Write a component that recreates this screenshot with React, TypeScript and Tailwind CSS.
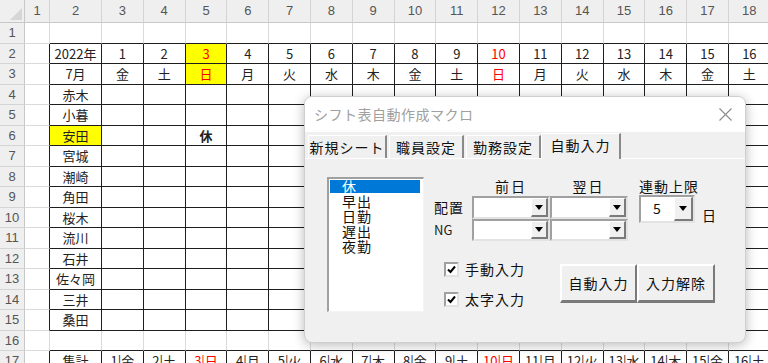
import React from 'react';

const days = ['金', '土', '日', '月', '火', '水', '木', '金', '土', '日', '月', '火', '水', '木', '金', '土'];
const names = ['赤木', '小暮', '安田', '宮城', '潮崎', '角田', '桜木', '流川', '石井', '佐々岡', '三井', '桑田'];
const cols = Array.from({ length: 18 }, (_, i) => i + 1);
const rows = Array.from({ length: 17 }, (_, i) => i + 1);

const inTable = (r: number, c: number) =>
  ((r >= 2 && r <= 15) || r === 17) && c >= 2 && c <= 18;

const wc = (c: number) => (c === 1 ? 'w-[25px]' : c === 2 ? 'w-[52px]' : 'w-[41.8px]');

function cellContent(r: number, c: number): { text: string; red?: boolean; yellow?: boolean; bold?: boolean } {
  if (r === 2) {
    if (c === 2) return { text: '2022年' };
    if (c >= 3) return { text: String(c - 2), red: days[c - 3] === '日', yellow: c === 5 };
  }
  if (r === 3) {
    if (c === 2) return { text: '7月' };
    if (c >= 3) return { text: days[c - 3], red: days[c - 3] === '日', yellow: c === 5 };
  }
  if (r >= 4 && r <= 15) {
    if (c === 2) return { text: names[r - 4], yellow: r === 6 };
    if (r === 6 && c === 5) return { text: '休', bold: true };
  }
  if (r === 17) {
    if (c === 2) return { text: '集計' };
    if (c >= 3) return { text: `${c - 2}|${days[c - 3]}`, red: days[c - 3] === '日' };
  }
  return { text: '' };
}

function Cell({ r, c }: { r: number; c: number }) {
  const rb = inTable(r, c) || inTable(r, c + 1);
  const bb = inTable(r, c) || inTable(r + 1, c);
  const ct = cellContent(r, c);
  return (
    <div
      className={`${wc(c)} shrink-0 h-full flex items-center justify-center overflow-hidden whitespace-nowrap text-[13px] border-r border-b ${
        rb ? 'border-r-[#1e1e1e]' : 'border-r-[#dadada]'
      } ${bb ? 'border-b-[#1e1e1e]' : 'border-b-[#dadada]'} ${ct.yellow ? 'bg-[#ffff00]' : 'bg-white'} ${
        ct.red ? 'text-[#ff0000]' : 'text-[#222]'
      } ${ct.bold ? 'font-bold' : ''}`}
    >
      {ct.text}
    </div>
  );
}

function DropBtn({ w }: { w: string }) {
  return (
    <div className={`${w} h-full shrink-0 bg-[#f0f0f0] border-t border-l border-t-white border-l-white border-r-2 border-b-2 border-r-[#7a7a7a] border-b-[#7a7a7a] flex items-center justify-center`}>
      <svg width="8" height="5" viewBox="0 0 8 5">
        <path d="M0 0 H8 L4 5 Z" fill="#000" />
      </svg>
    </div>
  );
}

function Combo() {
  return (
    <div className="w-[78px] h-full bg-white border-2 border-t-[#a0a0a0] border-l-[#a0a0a0] border-r-[#e3e3e3] border-b-[#e3e3e3] flex justify-end">
      <DropBtn w="w-[17px]" />
    </div>
  );
}

function CheckBox({ label }: { label: string }) {
  return (
    <div className="flex items-center h-[15px]">
      <div className="w-[15px] h-[15px] bg-white border-2 border-t-[#a0a0a0] border-l-[#a0a0a0] border-r-[#e3e3e3] border-b-[#e3e3e3] flex items-center justify-center">
        <svg width="9" height="9" viewBox="0 0 9 9">
          <path d="M1 4.5 L3.5 7 L8 1.5" stroke="#000" strokeWidth="2" fill="none" />
        </svg>
      </div>
      <span className="ml-[6px] text-[14px] tracking-[1px] text-[#111]">{label}</span>
    </div>
  );
}

function Btn({ label, w }: { label: string; w: string }) {
  return (
    <div className={`${w} h-[39px] bg-[#f0f0f0] border-t-2 border-l-2 border-t-white border-l-white border-r-2 border-b-[3px] border-r-[#7a7a7a] border-b-[#7a7a7a] flex items-center justify-center text-[14px] tracking-[1px] text-[#111]`}>
      {label}
    </div>
  );
}

function Dialog() {
  return (
    <div className="absolute left-[304px] top-[96px] w-[442px] h-[247px] rounded-[8px] bg-[#f0f0f0] border border-[#cfcfcf] shadow-[0_2px_12px_rgba(0,0,0,0.28)] overflow-hidden flex flex-col">
      <div className="h-[35px] shrink-0 bg-white flex items-center justify-between pl-[9px] pr-[13px]">
        <span className="text-[14px] text-[#a0a0a0] tracking-[0.5px]">シフト表自動作成マクロ</span>
        <svg width="13" height="13" viewBox="0 0 13 13">
          <path d="M0.5 0.5 L12.5 12.5 M12.5 0.5 L0.5 12.5" stroke="#8a8a8a" strokeWidth="1.1" />
        </svg>
      </div>
      <div className="h-[26px] shrink-0 flex items-end pl-[3px] text-[14px] tracking-[1px] text-[#111]">
        <div className="w-[79px] h-[23px] border-t border-l border-t-white border-l-white border-r-2 border-r-[#8a8a8a] flex items-center justify-center">新規シート</div>
        <div className="ml-[2px] w-[75px] h-[23px] border-t border-l border-t-white border-l-white border-r-2 border-r-[#8a8a8a] flex items-center justify-center">職員設定</div>
        <div className="ml-[2px] w-[75px] h-[23px] border-t border-l border-t-white border-l-white border-r-2 border-r-[#8a8a8a] flex items-center justify-center">勤務設定</div>
        <div className="w-[80px] h-[26px] -mb-[1px] relative z-10 bg-[#f0f0f0] border-t border-l border-t-white border-l-white border-r-2 border-r-[#8a8a8a] flex items-center justify-center pb-[2px]">自動入力</div>
      </div>
      <div className="flex-1 border-t border-t-white flex pl-[22px] pt-[18px]">
        <div className="w-[97px] h-[135px] shrink-0 bg-white border-t-2 border-l-2 border-t-[#a0a0a0] border-l-[#a0a0a0] border-r border-b border-r-[#f4f4f4] border-b-[#f4f4f4] pt-[1px] pl-[1px] text-[14px] tracking-[1px] text-[#111]">
          <div className="w-[90px] h-[13px] bg-[#0078d7] text-white pl-[12px] leading-[13px] mb-[1px]">休</div>
          <div className="pl-[12px] h-[15px] leading-[15px]">早出</div>
          <div className="pl-[12px] h-[15px] leading-[15px]">日勤</div>
          <div className="pl-[12px] h-[15px] leading-[15px]">遅出</div>
          <div className="pl-[12px] h-[15px] leading-[15px]">夜勤</div>
        </div>
        <div className="ml-[10px] flex flex-col text-[#111]">
          <div className="flex">
            <div className="w-[38px] flex flex-col text-[14px] tracking-[1px]">
              <div className="h-[19px]" />
              <div className="h-[23px] flex items-center">配置</div>
              <div className="h-[22px] flex items-center text-[13px] tracking-[0px] text-[#222]">NG</div>
            </div>
            <div className="flex flex-col">
              <div className="h-[19px] flex text-[14px] tracking-[2px]">
                <div className="w-[78px] flex items-center justify-center">前日</div>
                <div className="w-[77px] flex items-center justify-center">翌日</div>
              </div>
              <div className="h-[23px] flex">
                <Combo />
                <Combo />
              </div>
              <div className="h-[22px] flex">
                <Combo />
                <Combo />
              </div>
            </div>
            <div className="ml-[11px] flex flex-col">
              <div className="h-[18px] flex items-center text-[14px] tracking-[1px]">連動上限</div>
              <div className="flex items-end">
                <div className="w-[56px] h-[28px] bg-white border-2 border-t-[#a0a0a0] border-l-[#a0a0a0] border-r-[#e3e3e3] border-b-[#e3e3e3] flex">
                  <div className="flex-1 pl-[12px] pt-[1px] text-[14px]">5</div>
                  <DropBtn w="w-[19px]" />
                </div>
                <div className="ml-[7px] text-[14px] leading-[16px]">日</div>
              </div>
            </div>
          </div>
          <div className="flex mt-[21px] ml-[10px]">
            <div className="w-[116px] flex flex-col gap-[15px]">
              <CheckBox label="手動入力" />
              <CheckBox label="太字入力" />
            </div>
            <div className="flex mt-[2px]">
              <Btn label="自動入力" w="w-[77px]" />
              <Btn label="入力解除" w="w-[78px]" />
            </div>
          </div>
        </div>
      </div>
    </div>
  );
}

export default function App() {
  return (
    <div className="relative w-[768px] h-[363px] overflow-hidden bg-white font-['Noto_Sans_CJK_JP','Liberation_Sans',sans-serif]">
      <div className="flex flex-col">
        <div className="flex h-[23px] bg-[#efefef]">
          <div className="w-[25px] shrink-0 h-full border-r border-b border-r-[#c8c8c8] border-b-[#c8c8c8] relative">
            <svg className="absolute right-[2px] bottom-[2px]" width="12" height="12" viewBox="0 0 12 12">
              <path d="M12 0 V12 H0 Z" fill="#d6d6d6" />
            </svg>
          </div>
          {cols.map((c) => (
            <div
              key={c}
              className={`${wc(c)} shrink-0 h-full flex items-center justify-center text-[13px] text-[#555] border-r border-b border-r-[#d4d4d4] border-b-[#c8c8c8] font-['Liberation_Sans',sans-serif]`}
            >
              {c}
            </div>
          ))}
        </div>
        {rows.map((r) => (
          <div key={r} className="flex h-[20.5px]">
            <div className="w-[25px] shrink-0 h-full bg-[#efefef] flex items-center justify-center text-[13px] text-[#555] border-r border-b border-r-[#c8c8c8] border-b-[#d4d4d4] font-['Liberation_Sans',sans-serif]">
              {r}
            </div>
            {cols.map((c) => (
              <Cell key={c} r={r} c={c} />
            ))}
          </div>
        ))}
      </div>
      <Dialog />
    </div>
  );
}
